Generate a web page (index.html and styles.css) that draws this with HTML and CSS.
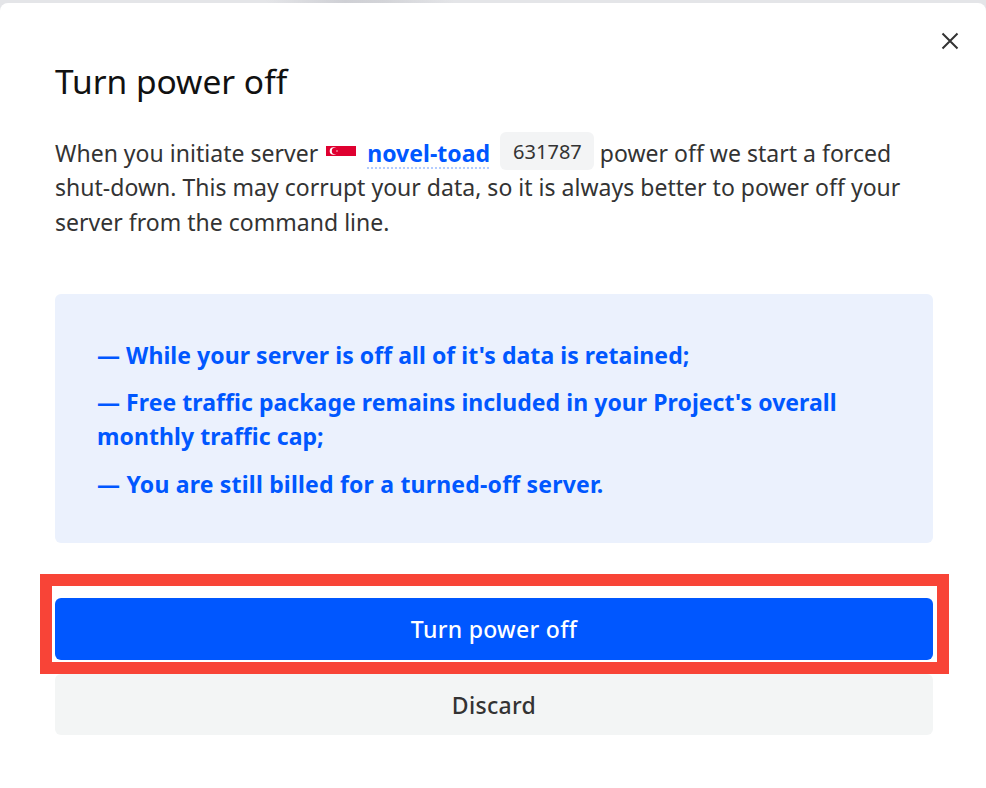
FILE: index.html
```html
<!DOCTYPE html>
<html lang="en">
<head>
    <meta charset="UTF-8">
    <meta name="viewport" content="width=device-width, initial-scale=1.0">
    <title>Turn power off</title>
    <link rel="stylesheet" href="styles.css">
</head>
<body>

    <div class="modal">
        <button class="close" aria-label="Close">
            <svg width="18" height="18" viewBox="0 0 18 18">
                <path d="M1.5 1.5 L16.5 16.5 M16.5 1.5 L1.5 16.5" stroke="#333" stroke-width="2" fill="none"/>
            </svg>
        </button>

        <h2>Turn power off</h2>

        <p class="intro">
            When you initiate server
            <svg class="flag" width="30" height="10" viewBox="0 0 30 10">
                <rect width="30" height="10" fill="#df0030"/>
                <circle cx="7.5" cy="5" r="3.8" fill="#fff"/>
                <circle cx="9" cy="5" r="3.2" fill="#df0030"/>
                <circle cx="11" cy="5" r="0.7" fill="#fff"/>
            </svg>
            <a class="server-link" href="#">novel-toad</a>
            <span class="server-id">631787</span>
            power off we start a forced shut-down. This may corrupt your data, so it is always better to power off your server from the command line.
        </p>

        <div class="notice">
            <p>— While your server is off all of it's data is retained;</p>
            <p>— Free traffic package remains included in your Project's overall monthly traffic cap;</p>
            <p class="last">— You are still billed for a turned-off server.</p>
        </div>

        <div class="highlight">
            <button class="btn primary">Turn power off</button>
        </div>
        <button class="btn secondary">Discard</button>
    </div>

</body>
</html>
```
FILE: styles.css
```css
html {
    height: 100%;
}

body {
    box-sizing: border-box;
    margin: 0;
    height: 788px;
    padding-top: 3px;
    overflow: hidden;
    background: linear-gradient(90deg, #e4e5e8 0, #e4e5e8 27%, #cfd0d5 35%, #d3d4d8 39%, #e4e5e8 46%, #e4e5e8 100%);
    font-family: 'Noto Sans', sans-serif;
    color: #333;
}

.modal {
    position: relative;
    box-sizing: border-box;
    height: 785px;
    background-color: #fff;
    border-radius: 8px 8px 0 0;
    padding: 60px 53px 0 55px;
}

.close {
    position: absolute;
    top: 29px;
    right: 27px;
    padding: 0;
    border: none;
    background: none;
    line-height: 0;
    cursor: pointer;
}

h2 {
    margin: 0 0 37px;
    font-size: 33.5px;
    font-weight: 400;
    line-height: 36px;
    color: #111;
}

.intro {
    margin: 0 0 55px;
    font-size: 23px;
    line-height: 34.4px;
    letter-spacing: 0.02px;
}

.flag {
    vertical-align: 6px;
    margin: 0 5px 0 2px;
}

.server-link {
    color: #0057ff;
    font-weight: 700;
    text-decoration: underline dotted #b3ccff 2px;
    text-underline-offset: 5px;
}

.server-id {
    display: inline-block;
    vertical-align: 3px;
    margin: -7px 0 -3px 4px;
    padding: 1px 12px 0 13px;
    background-color: #f3f4f5;
    border-radius: 6px;
    font-size: 20px;
    line-height: 37px;
}

.notice {
    padding: 43.5px 42px 42.5px;
    margin-bottom: 55px;
    background-color: #ebf1fd;
    border-radius: 6px;
    color: #0057ff;
    font-size: 23px;
    font-weight: 700;
    line-height: 34px;
    letter-spacing: 0.06px;
}

.notice p {
    margin: 0 0 13.5px;
}

.notice .last {
    margin-bottom: 0;
    letter-spacing: 0.2px;
}

.btn {
    display: block;
    width: 100%;
    border: none;
    border-radius: 6px;
    font-family: inherit;
    font-size: 23px;
    font-weight: 500;
    letter-spacing: 0.3px;
    cursor: pointer;
}

.primary {
    height: 62px;
    background-color: #0057ff;
    color: #fff;
}

.secondary {
    height: 61px;
    background-color: #f3f5f5;
    color: #333;
}

/* red annotation frame round the confirm button */
.highlight {
    box-sizing: border-box;
    height: 100px;
    margin: -24px -16px 0 -15px;
    padding: 12px 4px 2px 3px;
    border: 12px solid #f84437;
}
```
